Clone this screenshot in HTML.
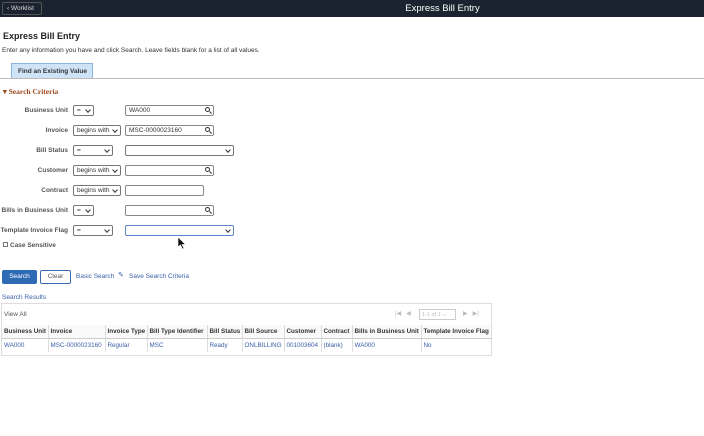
<!DOCTYPE html><html><head><style>
*{box-sizing:border-box}body{margin:0;width:704px;height:436px;background:#fff;font-family:"Liberation Sans",sans-serif;position:relative;overflow:hidden;font-size:7px;color:#333}
.a{position:absolute}
.lbl{position:absolute;font-size:6.5px;color:#555;font-weight:bold;text-align:right;width:68px;left:0;white-space:nowrap;line-height:11px}
.sel{position:absolute;height:11px;border:1px solid #777;border-radius:2px;font-size:6.5px;padding:1px 3px;background:#fff;white-space:nowrap;line-height:8px}
.sel:after{content:"";position:absolute;right:3px;top:2px;width:3px;height:3px;border-right:1.2px solid #333;border-bottom:1.2px solid #333;transform:rotate(45deg)}
.inp{position:absolute;height:11px;border:1px solid #888;border-radius:2px;font-size:6.5px;padding:1px 3px;background:#fff;line-height:8px}
.mag{position:absolute;right:3px;top:1px;width:5px;height:5px;border:1.3px solid #333;border-radius:50%}
.mag:after{content:"";position:absolute;left:3px;top:4px;width:3px;height:1.3px;background:#333;transform:rotate(45deg)}
table{border-collapse:collapse;font-size:6.3px;table-layout:fixed}
th{text-align:left;color:#333;padding:3px 2px;border-right:1px solid #ddd;border-bottom:1px solid #ccc;background:#fafafa;white-space:nowrap;overflow:hidden}
td{color:#3a5fa8;padding:3px 2px;border-right:1px solid #ddd;white-space:nowrap;overflow:hidden}
</style></head><body>
<div class="a" style="left:0;top:0;width:704px;height:17px;background:#1b2330"></div>
<div class="a" style="left:2px;top:2px;width:40px;height:13px;border:1px solid #555;border-radius:2px;color:#ddd;font-size:6.5px;padding:2px 4px;white-space:nowrap">&#8249; Worklist</div>
<div class="a" style="left:380px;top:3px;width:125px;text-align:center;color:#fff;font-size:9.5px">Express Bill Entry</div>
<div class="a" style="left:3px;top:31px;font-size:9px;font-weight:bold;color:#222">Express Bill Entry</div>
<div class="a" style="left:2px;top:47px;font-size:6.5px;color:#333">Enter any information you have and click Search. Leave fields blank for a list of all values.</div>
<div class="a" style="left:11px;top:63px;width:82px;height:16px;background:#cfe3f6;border:1px solid #8ab4dc;border-bottom:none;font-size:6.5px;font-weight:bold;padding:4px 6px;color:#333;white-space:nowrap">Find an Existing Value</div>
<div class="a" style="left:0;top:78px;width:704px;height:1px;background:#bbb"></div>
<div class="a" style="left:3px;top:87px;font-size:7.5px;color:#9b4a1e;font-family:'Liberation Serif',serif;font-weight:bold">&#9662; Search Criteria</div>

<div class="lbl" style="top:105px">Business Unit</div><div class="sel" style="left:73px;top:105px;width:21px">=</div><div class="inp" style="left:125px;top:105px;width:89px">WA000<span class="mag"></span></div>
<div class="lbl" style="top:125px">Invoice</div><div class="sel" style="left:73px;top:125px;width:48px">begins with</div><div class="inp" style="left:125px;top:125px;width:89px">MSC-0000023160<span class="mag"></span></div>
<div class="lbl" style="top:145px">Bill Status</div><div class="sel" style="left:73px;top:145px;width:40px">=</div><div class="sel" style="left:125px;top:145px;width:109px"></div>
<div class="lbl" style="top:165px">Customer</div><div class="sel" style="left:73px;top:165px;width:48px">begins with</div><div class="inp" style="left:125px;top:165px;width:89px"><span class="mag"></span></div>
<div class="lbl" style="top:185px">Contract</div><div class="sel" style="left:73px;top:185px;width:48px">begins with</div><div class="inp" style="left:125px;top:185px;width:79px"></div>
<div class="lbl" style="top:205px">Bills in Business Unit</div><div class="sel" style="left:73px;top:205px;width:21px">=</div><div class="inp" style="left:125px;top:205px;width:89px"><span class="mag"></span></div>
<div class="lbl" style="top:225px">Template Invoice Flag</div><div class="sel" style="left:73px;top:225px;width:40px">=</div><div class="sel" style="left:125px;top:225px;width:109px;border-color:#5b87c7"></div>
<svg class="a" style="left:177px;top:236px" width="10" height="14"><path d="M1 1 L1 11 L3.5 9 L5.5 13 L7 12.3 L5 8.5 L8.5 8.5 Z" fill="#111" stroke="#fff" stroke-width=".6"/></svg>
<div class="a" style="left:3px;top:242px;font-size:6.5px;color:#555;font-weight:bold;white-space:nowrap"><span style="display:inline-block;width:5px;height:5px;border:1px solid #777;margin-right:2px"></span>Case Sensitive</div>

<div class="a" style="left:2px;top:270px;width:35px;height:14px;background:#2f6bb5;border-radius:2px;color:#fff;font-size:6.5px;text-align:center;line-height:14px">Search</div>
<div class="a" style="left:40px;top:270px;width:31px;height:14px;border:1px solid #3a6bb0;border-radius:2px;color:#555;font-size:6.5px;text-align:center;line-height:12px">Clear</div>
<div class="a" style="left:76px;top:273px;font-size:6.5px;color:#3a5fa8">Basic Search</div>
<div class="a" style="left:118px;top:271px;font-size:7px;color:#3a5fa8">&#9998;</div>
<div class="a" style="left:129px;top:273px;font-size:6.5px;color:#3a5fa8">Save Search Criteria</div>
<div class="a" style="left:2px;top:294px;font-size:6.5px;color:#3a5fa8">Search Results</div>
<div class="a" style="left:1px;top:303px;width:491px;height:53px;border:1px solid #ddd"></div>
<div class="a" style="left:4px;top:311px;font-size:6.5px;color:#555">View All</div>
<div class="a" style="left:395px;top:310px;font-size:6px;color:#bbb">|&#9664; &nbsp; &#9664;</div>
<div class="a" style="left:419px;top:309px;width:37px;height:11px;border:1px solid #ccc;font-size:5.5px;color:#bbb;padding:2px;white-space:nowrap">1-1 of 1 &#8964;</div>
<div class="a" style="left:463px;top:310px;font-size:6px;color:#bbb">&#9654; &nbsp; &#9654;|</div>
<table class="a" style="left:2px;top:325px;width:489px">
<colgroup><col style="width:46px"><col style="width:57px"><col style="width:42px"><col style="width:60px"><col style="width:35px"><col style="width:42px"><col style="width:37px"><col style="width:31px"><col style="width:69px"><col style="width:70px"></colgroup>
<tr><th>Business Unit</th><th>Invoice</th><th>Invoice Type</th><th>Bill Type Identifier</th><th>Bill Status</th><th>Bill Source</th><th>Customer</th><th>Contract</th><th>Bills in Business Unit</th><th>Template Invoice Flag</th></tr>
<tr><td>WA000</td><td>MSC-0000023160</td><td>Regular</td><td>MSC</td><td>Ready</td><td>ONLBILLING</td><td>001003604</td><td>(blank)</td><td>WA000</td><td>No</td></tr>
</table>
</body></html>
